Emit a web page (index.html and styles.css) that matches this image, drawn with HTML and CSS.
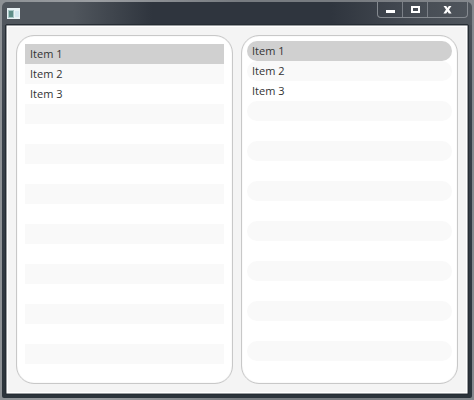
FILE: index.html
```
<!DOCTYPE html>
<html lang="en">
<head>
<meta charset="utf-8">
<title>Lists</title>
<link rel="stylesheet" href="styles.css">
</head>
<body>
<div class="window">
  <header class="titlebar">
    <svg class="app-icon" width="13" height="11" viewBox="0 0 13 11" aria-hidden="true">
      <rect width="13" height="11" fill="#e8f1f4"/>
      <rect x="1" y="2" width="6" height="8" fill="#a9c6c6"/>
      <rect x="2" y="3" width="4" height="6" fill="#5e8d87"/>
      <rect x="8" y="3" width="4" height="6" fill="#d3e6ee"/>
    </svg>
    <div class="controls">
      <button class="control" type="button" aria-label="Minimize">
        <svg width="11" height="10" viewBox="0 0 11 10"><rect x="1" y="5" width="9" height="3" fill="#fff"/></svg>
      </button>
      <button class="control" type="button" aria-label="Maximize">
        <svg width="11" height="10" viewBox="0 0 11 10"><rect x="2" y="2" width="7" height="5" fill="none" stroke="#fff" stroke-width="2"/></svg>
      </button>
      <button class="control control-close" type="button" aria-label="Close">
        <svg width="11" height="10" viewBox="0 0 11 10"><path d="M1.500 1h2.700l1.300 2 1.300-2h2.700L7 4.600 9.600 8.500H6.800L5.500 6.400 4.200 8.500H1.400L4 4.600z" fill="#fff"/></svg>
      </button>
    </div>
  </header>
  <main class="content">
    <ul class="list">
      <li class="row selected">Item 1</li><li class="row">Item 2</li><li class="row">Item 3</li><li class="row"></li>
      <li class="row"></li><li class="row"></li><li class="row"></li><li class="row"></li>
      <li class="row"></li><li class="row"></li><li class="row"></li><li class="row"></li>
      <li class="row"></li><li class="row"></li><li class="row"></li><li class="row"></li>
    </ul>
    <ul class="list list-rounded">
      <li class="row selected">Item 1</li><li class="row">Item 2</li><li class="row">Item 3</li><li class="row"></li>
      <li class="row"></li><li class="row"></li><li class="row"></li><li class="row"></li>
      <li class="row"></li><li class="row"></li><li class="row"></li><li class="row"></li>
      <li class="row"></li><li class="row"></li><li class="row"></li><li class="row"></li>
    </ul>
  </main>
</div>
</body>
</html>
```
FILE: styles.css
```
* {
  box-sizing: border-box;
}

body {
  margin: 0;
  min-height: 100vh;
  display: flex;
  padding: 2px;
  background: linear-gradient(90deg, #8d9195, #9b9ea2 20%, #777b80 50%, #777b80 75%, #85898e);
  font-family: "Open Sans", "Noto Sans", sans-serif;
  font-size: 11px;
  color: #333;
}

.window {
  flex: 1;
  display: flex;
  flex-direction: column;
  padding: 0 4px 4px;
  border-radius: 5px 5px 2px 2px;
  background:
    linear-gradient(90deg, #50565d, #50565d 15%, #2f353e 32%, #2f353e 70%, #464c54 88%, #50565d) top / 100% 23px no-repeat,
    linear-gradient(#50565d, #39414a 30%, #303841 70%, #2c343b);
}

.titlebar {
  display: flex;
  justify-content: space-between;
  height: 23px;
}

.app-icon {
  margin: 6px 0 0 1px;
}

.controls {
  display: flex;
  height: 16px;
  border: 1px solid #858a90;
  border-top: 0;
  border-radius: 0 0 4px 4px;
}

.control {
  display: flex;
  align-items: center;
  justify-content: center;
  width: 25px;
  padding: 0;
  border: 0;
  border-right: 1px solid #7b8087;
  background: transparent;
}

.control-close {
  width: 39px;
  border-right: 0;
}

.content {
  flex: 1;
  display: grid;
  grid-template-columns: 1fr 1fr;
  gap: 8px;
  padding: 9px;
  border: 1px solid #9a9da0;
  border-radius: 1px;
  background: #f4f4f4;
  outline: 1px solid #252c33;
  box-shadow: inset 0 0 0 1px #fff;
}

.list {
  margin: 0;
  padding: 8px;
  list-style: none;
  background: #fff;
  border: 1px solid #c8c8c8;
  border-radius: 18px;
  box-shadow: inset 0 0 1px #ccc;
}

.list-rounded {
  padding: 5px;
}

.row {
  height: 20px;
  padding: 0 5px;
  line-height: 20px;
}

.row:nth-child(even) {
  background: #f9f9f9;
}

.list-rounded .row {
  border-radius: 10px;
}

.row.selected {
  background: #d0d0d0;
}
```
